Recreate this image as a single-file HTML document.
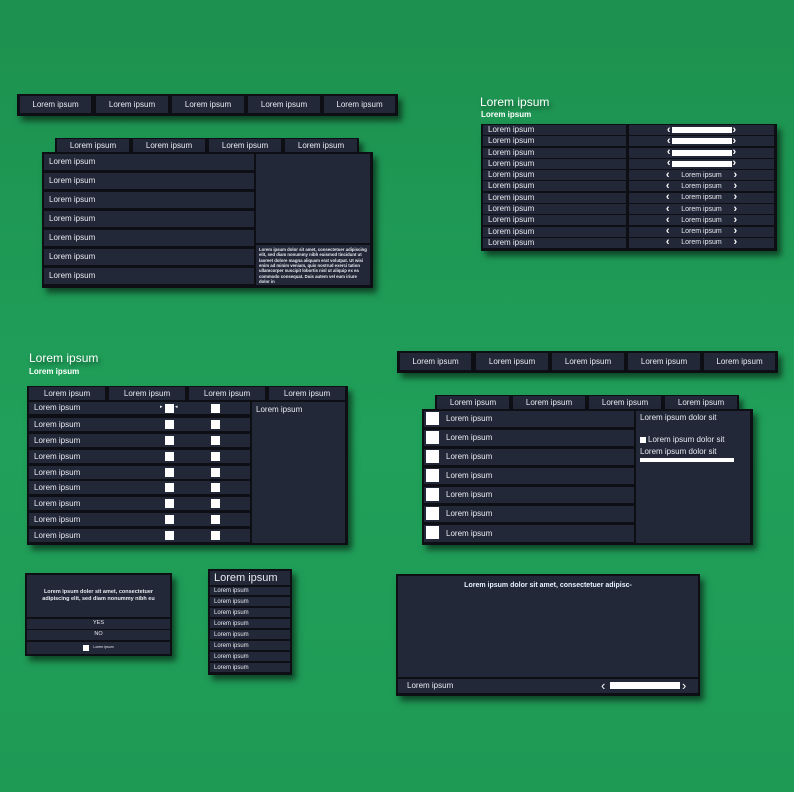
<!DOCTYPE html>
<html><head><meta charset="utf-8"><style>
body{margin:0;width:794px;height:792px;overflow:hidden;background:linear-gradient(180deg,#1d914f 0%,#20a05a 55%,#1f9a55 100%);font-family:"Liberation Sans",sans-serif;color:#e8ebf0;position:relative}
.a{position:absolute;box-sizing:border-box}
.bx{background:#0d0f14;box-shadow:4px 5px 6px rgba(0,0,0,.55)}
.c{background:#232839;font-size:8px;line-height:1;display:flex;align-items:center;white-space:nowrap}
.ct{justify-content:center}
.pl{padding-left:5px}
.w{background:#fff}
.h1{font-size:12px;color:#fff;text-shadow:2px 3px 4px rgba(0,0,0,.5)}
.h2{font-size:8px;font-weight:bold;color:#fff}
.ar{font-size:11px;font-weight:bold;color:#fff;line-height:1}
</style></head><body>

<!-- Panel 1 -->
<div class="a bx" style="left:17px;top:94px;width:381px;height:22px"></div>
<div class="a c ct" style="left:20px;top:96px;width:71px;height:17px">Lorem ipsum</div>
<div class="a c ct" style="left:96px;top:96px;width:72px;height:17px">Lorem ipsum</div>
<div class="a c ct" style="left:172px;top:96px;width:72px;height:17px">Lorem ipsum</div>
<div class="a c ct" style="left:248px;top:96px;width:72px;height:17px">Lorem ipsum</div>
<div class="a c ct" style="left:324px;top:96px;width:71px;height:17px">Lorem ipsum</div>

<!-- Panel 2 -->
<div class="a bx" style="left:55px;top:138px;width:304px;height:16px"></div>
<div class="a c ct" style="left:57px;top:139px;width:72px;height:13px">Lorem ipsum</div>
<div class="a c ct" style="left:133px;top:139px;width:72px;height:13px">Lorem ipsum</div>
<div class="a c ct" style="left:209px;top:139px;width:72px;height:13px">Lorem ipsum</div>
<div class="a c ct" style="left:285px;top:139px;width:72px;height:13px">Lorem ipsum</div>
<div class="a bx" style="left:42px;top:152px;width:331px;height:136px"></div>
<div class="a c pl" style="left:44px;top:154px;width:210px;height:16px">Lorem ipsum</div>
<div class="a c pl" style="left:44px;top:173px;width:210px;height:16px">Lorem ipsum</div>
<div class="a c pl" style="left:44px;top:192px;width:210px;height:16px">Lorem ipsum</div>
<div class="a c pl" style="left:44px;top:211px;width:210px;height:16px">Lorem ipsum</div>
<div class="a c pl" style="left:44px;top:230px;width:210px;height:16px">Lorem ipsum</div>
<div class="a c pl" style="left:44px;top:249px;width:210px;height:16px">Lorem ipsum</div>
<div class="a c pl" style="left:44px;top:268px;width:210px;height:16px">Lorem ipsum</div>
<div class="a c" style="left:256px;top:154px;width:114px;height:89px"></div>
<div class="a c" style="left:256px;top:245px;width:114px;height:40px;font-size:4.3px;line-height:1.25;white-space:normal;padding:2px 3px;align-items:flex-start;font-weight:bold">Lorem ipsum dolor sit amet, consectetuer adipiscing elit, sed diam nonummy nibh euismod tincidunt ut laoreet dolore magna aliquam erat volutpat. Ut wisi enim ad minim veniam, quis nostrud exerci tation ullamcorper suscipit lobortis nisl ut aliquip ex ea commodo consequat. Duis autem vel eum iriure dolor in</div>

<!-- Panel 3 -->
<div class="a h1" style="left:480px;top:95px">Lorem ipsum</div>
<div class="a h2" style="left:481px;top:110px">Lorem ipsum</div>
<div class="a bx" style="left:481px;top:124px;width:296px;height:127px"></div>
<div class="a" style="left:483px;top:125px;width:291px">
<div style="display:grid;grid-template-columns:143px 145px;column-gap:3px;row-gap:1.3px">
<div class="c pl" style="height:10px">Lorem ipsum</div><div class="c ct" style="height:10px"><span class="ar">‹</span><span class="w" style="width:60px;height:6px;margin:0 1px"></span><span class="ar">›</span></div>
<div class="c pl" style="height:10px">Lorem ipsum</div><div class="c ct" style="height:10px"><span class="ar">‹</span><span class="w" style="width:60px;height:6px;margin:0 1px"></span><span class="ar">›</span></div>
<div class="c pl" style="height:10px">Lorem ipsum</div><div class="c ct" style="height:10px"><span class="ar">‹</span><span class="w" style="width:60px;height:6px;margin:0 1px"></span><span class="ar">›</span></div>
<div class="c pl" style="height:10px">Lorem ipsum</div><div class="c ct" style="height:10px"><span class="ar">‹</span><span class="w" style="width:60px;height:6px;margin:0 1px"></span><span class="ar">›</span></div>
<div class="c pl" style="height:10px">Lorem ipsum</div><div class="c ct" style="height:10px;font-size:7px"><span class="ar">‹</span><span style="width:64px;text-align:center">Lorem ipsum</span><span class="ar">›</span></div>
<div class="c pl" style="height:10px">Lorem ipsum</div><div class="c ct" style="height:10px;font-size:7px"><span class="ar">‹</span><span style="width:64px;text-align:center">Lorem ipsum</span><span class="ar">›</span></div>
<div class="c pl" style="height:10px">Lorem ipsum</div><div class="c ct" style="height:10px;font-size:7px"><span class="ar">‹</span><span style="width:64px;text-align:center">Lorem ipsum</span><span class="ar">›</span></div>
<div class="c pl" style="height:10px">Lorem ipsum</div><div class="c ct" style="height:10px;font-size:7px"><span class="ar">‹</span><span style="width:64px;text-align:center">Lorem ipsum</span><span class="ar">›</span></div>
<div class="c pl" style="height:10px">Lorem ipsum</div><div class="c ct" style="height:10px;font-size:7px"><span class="ar">‹</span><span style="width:64px;text-align:center">Lorem ipsum</span><span class="ar">›</span></div>
<div class="c pl" style="height:10px">Lorem ipsum</div><div class="c ct" style="height:10px;font-size:7px"><span class="ar">‹</span><span style="width:64px;text-align:center">Lorem ipsum</span><span class="ar">›</span></div>
<div class="c pl" style="height:10px">Lorem ipsum</div><div class="c ct" style="height:10px;font-size:7px"><span class="ar">‹</span><span style="width:64px;text-align:center">Lorem ipsum</span><span class="ar">›</span></div>
</div></div>

<!-- Panel 4 -->
<div class="a h1" style="left:29px;top:351px">Lorem ipsum</div>
<div class="a h2" style="left:29px;top:367px">Lorem ipsum</div>
<div class="a bx" style="left:27px;top:386px;width:321px;height:159px"></div>
<div class="a c ct" style="left:29px;top:387px;width:76px;height:13px">Lorem ipsum</div>
<div class="a c ct" style="left:109px;top:387px;width:76px;height:13px">Lorem ipsum</div>
<div class="a c ct" style="left:189px;top:387px;width:76px;height:13px">Lorem ipsum</div>
<div class="a c ct" style="left:269px;top:387px;width:76px;height:13px">Lorem ipsum</div>
<div class="a c" style="left:252px;top:402px;width:93px;height:141px;align-items:flex-start;padding:4px 4px">Lorem ipsum</div>
<div class="a c pl" style="left:29px;top:402px;width:221px;height:12px">Lorem ipsum</div>
<div class="a c pl" style="left:29px;top:418px;width:221px;height:13px">Lorem ipsum</div>
<div class="a c pl" style="left:29px;top:434px;width:221px;height:13px">Lorem ipsum</div>
<div class="a c pl" style="left:29px;top:450px;width:221px;height:13px">Lorem ipsum</div>
<div class="a c pl" style="left:29px;top:466px;width:221px;height:13px">Lorem ipsum</div>
<div class="a c pl" style="left:29px;top:481px;width:221px;height:13px">Lorem ipsum</div>
<div class="a c pl" style="left:29px;top:497px;width:221px;height:13px">Lorem ipsum</div>
<div class="a c pl" style="left:29px;top:513px;width:221px;height:13px">Lorem ipsum</div>
<div class="a c pl" style="left:29px;top:529px;width:221px;height:13px">Lorem ipsum</div>
<div class="a" style="left:160px;top:404px;font-size:5px;color:#fff">▸</div>
<div class="a" style="left:175px;top:404px;font-size:5px;color:#fff">◂</div>
<div class="a w" style="left:165px;top:404px;width:9px;height:9px"></div><div class="a w" style="left:211px;top:404px;width:9px;height:9px"></div>
<div class="a w" style="left:165px;top:420px;width:9px;height:9px"></div><div class="a w" style="left:211px;top:420px;width:9px;height:9px"></div>
<div class="a w" style="left:165px;top:436px;width:9px;height:9px"></div><div class="a w" style="left:211px;top:436px;width:9px;height:9px"></div>
<div class="a w" style="left:165px;top:452px;width:9px;height:9px"></div><div class="a w" style="left:211px;top:452px;width:9px;height:9px"></div>
<div class="a w" style="left:165px;top:468px;width:9px;height:9px"></div><div class="a w" style="left:211px;top:468px;width:9px;height:9px"></div>
<div class="a w" style="left:165px;top:483px;width:9px;height:9px"></div><div class="a w" style="left:211px;top:483px;width:9px;height:9px"></div>
<div class="a w" style="left:165px;top:499px;width:9px;height:9px"></div><div class="a w" style="left:211px;top:499px;width:9px;height:9px"></div>
<div class="a w" style="left:165px;top:515px;width:9px;height:9px"></div><div class="a w" style="left:211px;top:515px;width:9px;height:9px"></div>
<div class="a w" style="left:165px;top:531px;width:9px;height:9px"></div><div class="a w" style="left:211px;top:531px;width:9px;height:9px"></div>

<!-- Panel 5 -->
<div class="a bx" style="left:397px;top:351px;width:381px;height:22px"></div>
<div class="a c ct" style="left:400px;top:353px;width:71px;height:17px">Lorem ipsum</div>
<div class="a c ct" style="left:476px;top:353px;width:72px;height:17px">Lorem ipsum</div>
<div class="a c ct" style="left:552px;top:353px;width:72px;height:17px">Lorem ipsum</div>
<div class="a c ct" style="left:628px;top:353px;width:72px;height:17px">Lorem ipsum</div>
<div class="a c ct" style="left:704px;top:353px;width:71px;height:17px">Lorem ipsum</div>

<!-- Panel 6 -->
<div class="a bx" style="left:435px;top:395px;width:304px;height:16px"></div>
<div class="a c ct" style="left:437px;top:396px;width:72px;height:13px">Lorem ipsum</div>
<div class="a c ct" style="left:513px;top:396px;width:72px;height:13px">Lorem ipsum</div>
<div class="a c ct" style="left:589px;top:396px;width:72px;height:13px">Lorem ipsum</div>
<div class="a c ct" style="left:665px;top:396px;width:72px;height:13px">Lorem ipsum</div>
<div class="a bx" style="left:422px;top:409px;width:331px;height:136px"></div>
<div class="a c" style="left:636px;top:411px;width:114px;height:132px;flex-direction:column;align-items:flex-start;padding:3px 4px">
<div>Lorem ipsum dolor sit</div>
<div style="margin-top:14px;display:flex;align-items:center"><span class="w" style="width:6px;height:6px;margin-right:2px;display:inline-block"></span>Lorem ipsum dolor sit</div>
<div style="margin-top:4px">Lorem ipsum dolor sit</div>
<div class="w" style="width:94px;height:4px;margin-top:2px"></div>
</div>
<div class="a c" style="left:424px;top:411px;width:210px;height:16px;padding-left:22px">Lorem ipsum</div>
<div class="a c" style="left:424px;top:430px;width:210px;height:16px;padding-left:22px">Lorem ipsum</div>
<div class="a c" style="left:424px;top:449px;width:210px;height:16px;padding-left:22px">Lorem ipsum</div>
<div class="a c" style="left:424px;top:468px;width:210px;height:16px;padding-left:22px">Lorem ipsum</div>
<div class="a c" style="left:424px;top:487px;width:210px;height:16px;padding-left:22px">Lorem ipsum</div>
<div class="a c" style="left:424px;top:506px;width:210px;height:16px;padding-left:22px">Lorem ipsum</div>
<div class="a c" style="left:424px;top:525px;width:210px;height:17px;padding-left:22px">Lorem ipsum</div>
<div class="a w" style="left:426px;top:412px;width:13px;height:13px"></div>
<div class="a w" style="left:426px;top:431px;width:13px;height:13px"></div>
<div class="a w" style="left:426px;top:450px;width:13px;height:13px"></div>
<div class="a w" style="left:426px;top:469px;width:13px;height:13px"></div>
<div class="a w" style="left:426px;top:488px;width:13px;height:13px"></div>
<div class="a w" style="left:426px;top:507px;width:13px;height:13px"></div>
<div class="a w" style="left:426px;top:526px;width:13px;height:13px"></div>

<!-- Panel 7 -->
<div class="a bx" style="left:25px;top:573px;width:147px;height:83px"></div>
<div class="a c ct" style="left:27px;top:575px;width:143px;height:42px;font-size:5.5px;white-space:normal;text-align:center;line-height:1.35;padding:0 8px;font-weight:bold">Lorem ipsum doler sit amet, consectetuer adipiscing elit, sed diam nonummy nibh eu</div>
<div class="a c ct" style="left:27px;top:619px;width:143px;height:10px;font-size:5.5px">YES</div>
<div class="a c ct" style="left:27px;top:630px;width:143px;height:10px;font-size:5.5px">NO</div>
<div class="a c ct" style="left:27px;top:642px;width:143px;height:12px;font-size:3.5px"><span class="w" style="width:6px;height:6px;margin-right:4px"></span>Lorem ipsum</div>

<!-- Panel 8 -->
<div class="a bx" style="left:208px;top:569px;width:84px;height:106px"></div>
<div class="a c" style="left:210px;top:571px;width:80px;height:14px;font-size:11px;padding-left:4px">Lorem ipsum</div>
<div class="a c" style="left:210px;top:587px;width:80px;height:8px;font-size:6px;padding-left:4px">Lorem ipsum</div>
<div class="a c" style="left:210px;top:597px;width:80px;height:9px;font-size:6px;padding-left:4px">Lorem ipsum</div>
<div class="a c" style="left:210px;top:608px;width:80px;height:9px;font-size:6px;padding-left:4px">Lorem ipsum</div>
<div class="a c" style="left:210px;top:619px;width:80px;height:9px;font-size:6px;padding-left:4px">Lorem ipsum</div>
<div class="a c" style="left:210px;top:630px;width:80px;height:9px;font-size:6px;padding-left:4px">Lorem ipsum</div>
<div class="a c" style="left:210px;top:641px;width:80px;height:9px;font-size:6px;padding-left:4px">Lorem ipsum</div>
<div class="a c" style="left:210px;top:652px;width:80px;height:9px;font-size:6px;padding-left:4px">Lorem ipsum</div>
<div class="a c" style="left:210px;top:663px;width:80px;height:9px;font-size:6px;padding-left:4px">Lorem ipsum</div>

<!-- Panel 9 -->
<div class="a bx" style="left:396px;top:574px;width:304px;height:122px"></div>
<div class="a c" style="left:398px;top:576px;width:300px;height:101px;align-items:flex-start;justify-content:center;padding-top:6px;font-size:7px;color:#e6f3ff;font-weight:bold">Lorem ipsum dolor sit amet, consectetuer adipisc-</div>
<div class="a c" style="left:398px;top:679px;width:300px;height:14px;padding-left:9px">Lorem ipsum</div>
<div class="a ar" style="left:601px;top:679px;font-size:13px;font-weight:normal">‹</div>
<div class="a w" style="left:610px;top:682px;width:70px;height:7px"></div>
<div class="a ar" style="left:682px;top:679px;font-size:13px;font-weight:normal">›</div>
</body></html>
